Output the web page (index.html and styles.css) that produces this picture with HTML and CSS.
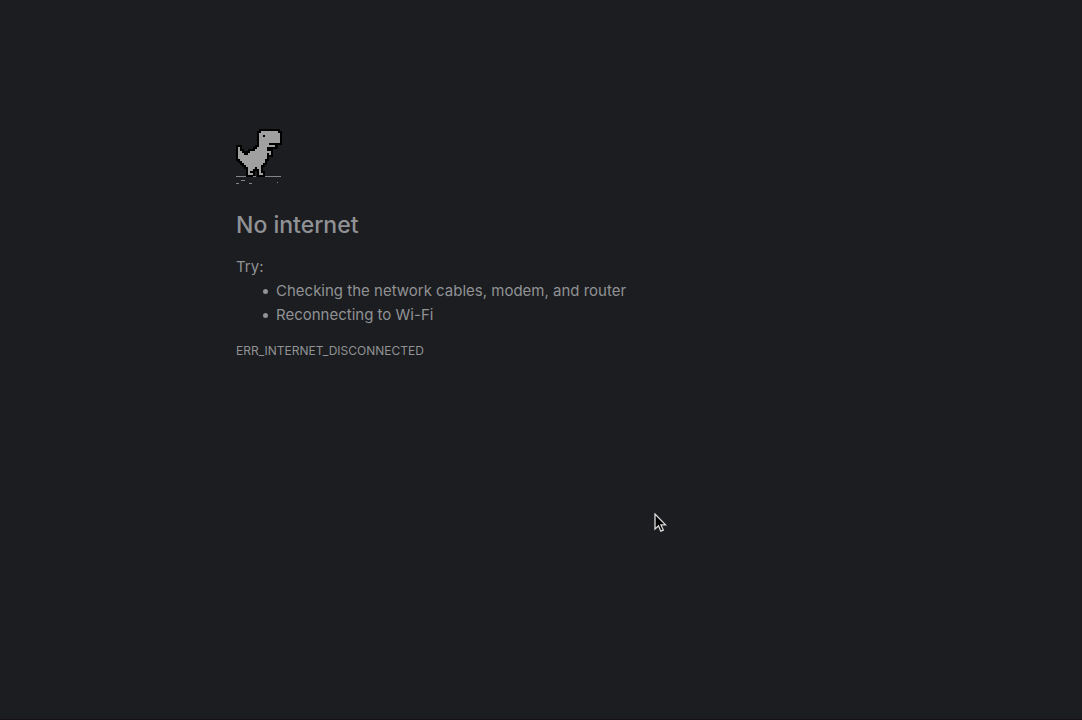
FILE: index.html
```html
<!DOCTYPE html>
<html lang="en">
<head>
    <meta charset="UTF-8">
    <meta name="viewport" content="width=device-width, initial-scale=1.0">
    <title>No internet</title>
    <link rel="stylesheet" href="styles.css">
</head>
<body>

    <main class="interstitial">
        <svg class="dino" viewBox="0 0 45 56" aria-hidden="true">
            <defs>
                <!-- one unit per sprite pixel, row by row -->
                <path id="trex" d="M11 0h8v1h-8z M10 1h10v5h-10z M10 6h5v1h-5z M10 7h8v1h-8z M0 8h1v4h-1z M9 8h5v1h-5z M8 9h6v1h-6z M1 10h1v2h-1z M6 10h10v1h-10z M2 11h1v1h-1z M5 11h9v1h-9z M15 11h1v1h-1z M0 12h14v2h-14z M1 14h12v1h-12z M2 15h11v1h-11z M3 16h9v1h-9z M4 17h7v1h-7z M5 18h3v1h-3z M9 18h2v1h-2z M5 19h2v1h-2z M10 19h1v2h-1z M5 20h1v1h-1z M5 21h2v1h-2z M10 21h2v1h-2z"/>
            </defs>
            <g transform="translate(2 2) scale(2.08 2)" shape-rendering="crispEdges">
                <use class="outline" href="#trex"/>
                <use class="body" href="#trex"/>
                <path class="eye" d="M12 2h1v1h-1z"/>
            </g>
            <!-- ground -->
            <path class="ground" d="M0 47h10v1H0zM17 47h3v1h-3zM29 47h16v1H29zM0 54h3v1H0zM5 51h4v1H5zM13 54h3v1h-3zM41 53h1v1h-1z"/>
        </svg>

        <h1>No internet</h1>

        <div class="suggestions">
            <p>Try:</p>
            <ul>
                <li>Checking the network cables, modem, and router</li>
                <li>Reconnecting to Wi-Fi</li>
            </ul>
        </div>

        <div class="error-code">ERR_INTERNET_DISCONNECTED</div>
    </main>

    <svg class="cursor" viewBox="0 0 13 20" aria-hidden="true">
        <path d="M1 1v15l3.500-3.200 2.300 5.400 2.500-1.100-2.300-5.200h4.600z"/>
    </svg>

</body>
</html>
```

FILE: styles.css
```css
* {
    margin: 0;
    padding: 0;
    box-sizing: border-box;
}

body {
    min-height: 100vh;
    background-color: #1c1d20;
    border-bottom: 1px solid #170f18;
    color: #909295;
    font-family: Inter, "Liberation Sans", sans-serif;
    font-size: 15px;
    line-height: 24px;
}

.interstitial {
    max-width: 610px;
    margin: 0 auto;
    padding-top: 129px;
}

.dino {
    display: block;
    width: 45px;
    height: 56px;
    overflow: visible;
}

.ground {
    fill: #858585;
}

.outline {
    fill: #000;
    stroke: #000;
    stroke-width: 2;
}

.body {
    fill: #a0a0a0;
}

.eye {
    fill: #000;
}

h1 {
    margin-top: 24px;
    font-size: 23px;
    font-weight: 500;
    line-height: 32px;
}

.suggestions {
    margin-top: 14px;
}

ul {
    padding-left: 27px;
    list-style: none;
}

li {
    display: flex;
    align-items: center;
    gap: 8px;
}

li::before {
    content: "";
    width: 5px;
    height: 5px;
    border-radius: 50%;
    background-color: #909295;
}

.error-code {
    margin-top: 12px;
    font-size: 12px;
}

.cursor {
    position: absolute;
    left: 654px;
    top: 513px;
    width: 13px;
    height: 20px;
    fill: #000;
    stroke: #dcdcdc;
    stroke-width: 1.3;
}
```
